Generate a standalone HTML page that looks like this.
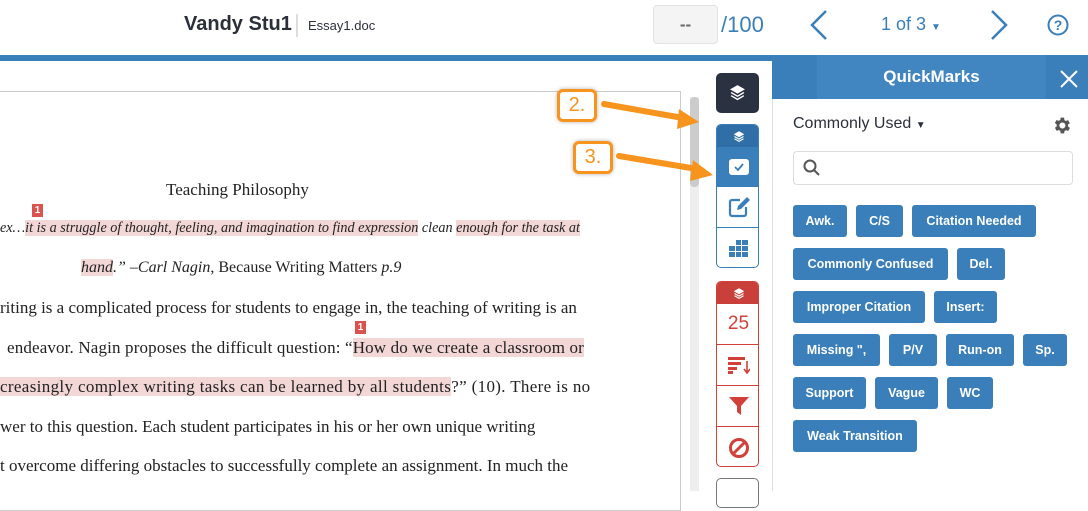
<!DOCTYPE html>
<html><head><meta charset="utf-8"><style>
*{margin:0;padding:0;box-sizing:border-box}
body{width:1088px;height:491px;overflow:hidden;background:#fff;font-family:"Liberation Sans",sans-serif;position:relative}
.a{position:absolute}
.doc{font-family:"Liberation Serif",serif;font-size:17px;color:#222;white-space:nowrap}
.hl{background:#f3d6d6}
.btn{position:absolute;height:32px;background:#3a7fba;color:#fff;font-size:12.5px;font-weight:bold;border-radius:3px;text-align:center;line-height:32px}
.tb{position:absolute;left:716px;width:43px}
.cell{position:absolute;left:0;width:43px;display:flex;align-items:center;justify-content:center}
.badge{position:absolute;background:#d9534f;color:#fff;font-size:10px;font-weight:bold;width:11px;height:13px;text-align:center;line-height:13px;font-family:"Liberation Sans",sans-serif}
.call{position:absolute;width:40px;height:33px;border:3px solid #f7941d;border-radius:6px;background:#fff;color:#f7941d;font-size:20px;text-align:center;line-height:27px;box-shadow:0 0 4px rgba(0,0,0,.3)}
</style></head><body>
<div class="a" style="left:184px;top:13px;font-size:20px;font-weight:bold;color:#2a2f3a">Vandy Stu1</div>
<div class="a" style="left:296px;top:14px;width:2px;height:23px;background:#ddd"></div>
<div class="a" style="left:308px;top:18px;font-size:13px;color:#2a2f3a">Essay1.doc</div>
<div class="a" style="left:653px;top:5px;width:65px;height:39px;background:#f4f4f4;border:1px solid #e3e3e3;border-radius:4px;text-align:center;line-height:37px;font-size:17px;font-weight:bold;color:#666">--</div>
<div class="a" style="left:721px;top:12px;font-size:22px;color:#3a7fba">/100</div>
<svg class="a" style="left:808px;top:9px" width="22" height="32"><path d="M18 2 L4 16 L18 30" stroke="#3a7fba" stroke-width="2.5" fill="none"/></svg>
<div class="a" style="left:881px;top:14px;font-size:18px;color:#3a7fba">1 of 3 <span style="font-size:10px">▼</span></div>
<svg class="a" style="left:988px;top:9px" width="22" height="32"><path d="M4 2 L18 16 L4 30" stroke="#3a7fba" stroke-width="2.5" fill="none"/></svg>
<svg class="a" style="left:1047px;top:14px" width="22" height="22"><circle cx="11" cy="11" r="9.5" stroke="#3a7fba" stroke-width="2" fill="none"/><text x="11" y="16" font-size="14" font-weight="bold" fill="#3a7fba" text-anchor="middle" font-family="Liberation Sans">?</text></svg>
<div class="a" style="left:0;top:55px;width:1088px;height:6px;background:#3a7fba"></div>
<div class="a" style="left:772px;top:55px;width:316px;height:44px;background:#3a7fba"></div>
<div class="a" style="left:817px;top:55px;width:229px;height:44px;background:#4186c0;color:#fff;font-weight:bold;font-size:17px;text-align:center;line-height:44px">QuickMarks</div>
<svg class="a" style="left:1060px;top:70px" width="18" height="18"><path d="M1 1L17 17M17 1L1 17" stroke="#fff" stroke-width="2"/></svg>
<div class="a" style="left:772px;top:99px;width:1px;height:392px;background:#ddd"></div>
<div class="a" style="left:793px;top:115px;font-size:16px;color:#2a2f3a">Commonly Used <span style="font-size:10px">▼</span></div>
<svg class="a" style="left:1051px;top:115px" width="21" height="21" viewBox="0 0 24 24"><path fill="#555" d="M19.4 13a7.5 7.5 0 0 0 0-2l2.1-1.6-2-3.5-2.5 1a7.5 7.5 0 0 0-1.7-1L15 3h-4l-.4 2.7a7.5 7.5 0 0 0-1.7 1l-2.5-1-2 3.5L6.600 11a7.5 7.5 0 0 0 0 2l-2.1 1.6 2 3.5 2.5-1a7.5 7.5 0 0 0 1.7 1L11 21h4l.4-2.7a7.5 7.5 0 0 0 1.7-1l2.5 1 2-3.5zM13 15.5a3.5 3.5 0 1 1 0-7 3.5 3.5 0 0 1 0 7z"/></svg>
<div class="a" style="left:793px;top:151px;width:280px;height:34px;border:1px solid #ddd;border-radius:4px"></div>
<svg class="a" style="left:803px;top:159px" width="18" height="18"><circle cx="7" cy="7" r="5.5" stroke="#555" stroke-width="2" fill="none"/><path d="M11 11L16 16" stroke="#555" stroke-width="2"/></svg>
<div class="btn" style="left:793px;top:205px;width:54px">Awk.</div>
<div class="btn" style="left:856px;top:205px;width:47px">C/S</div>
<div class="btn" style="left:912px;top:205px;width:124px">Citation Needed</div>
<div class="btn" style="left:793px;top:248px;width:155px">Commonly Confused</div>
<div class="btn" style="left:957px;top:248px;width:48px">Del.</div>
<div class="btn" style="left:793px;top:291px;width:132px">Improper Citation</div>
<div class="btn" style="left:934px;top:291px;width:63px">Insert:</div>
<div class="btn" style="left:793px;top:334px;width:87px">Missing ",</div>
<div class="btn" style="left:889px;top:334px;width:48px">P/V</div>
<div class="btn" style="left:946px;top:334px;width:68px">Run-on</div>
<div class="btn" style="left:1023px;top:334px;width:44px">Sp.</div>
<div class="btn" style="left:793px;top:377px;width:73px">Support</div>
<div class="btn" style="left:875px;top:377px;width:63px">Vague</div>
<div class="btn" style="left:947px;top:377px;width:46px">WC</div>
<div class="btn" style="left:793px;top:420px;width:124px">Weak Transition</div>
<div class="a" style="left:-5px;top:91px;width:686px;height:420px;border:1px solid #ccc"></div>
<div class="a" style="left:690px;top:97px;width:9px;height:394px;background:#eee"></div>
<div class="a" style="left:690px;top:97px;width:9px;height:90px;background:#ccc;border-radius:4px"></div>
<div class="a doc" style="left:166px;top:180px">Teaching Philosophy</div>
<div class="badge" style="left:32px;top:204px">1</div>
<div class="a doc" style="left:-4px;top:220px;font-style:italic;font-size:14.2px">lex…<span class="hl">it is a struggle of thought, feeling, and imagination to find expression</span> clean <span class="hl">enough for the task at</span></div>
<div class="a doc" style="left:81px;top:259px;font-size:16px"><i><span class="hl">hand</span>.” –Carl Nagin</i>, Because Writing Matters <i>p.9</i></div>
<div class="a doc" style="left:0;top:298px">riting is a complicated process for students to engage in, the teaching of writing is an</div>
<div class="badge" style="left:355px;top:321px">1</div>
<div class="a doc" style="left:7px;top:338px;letter-spacing:0.15px">endeavor.  Nagin proposes the difficult question: “<span class="hl">How do we create a classroom or</span></div>
<div class="a doc" style="left:0;top:377px;letter-spacing:0.35px"><span class="hl">creasingly complex writing tasks can be learned by all students</span>?” (10).  There is no</div>
<div class="a doc" style="left:0;top:417px">wer to this question.  Each student participates in his or her own unique writing</div>
<div class="a doc" style="left:0;top:456px">t overcome differing obstacles to successfully complete an assignment.  In much the</div>
<div class="tb" style="top:73px;height:40px;background:#2a3140;border-radius:5px"></div>
<svg class="a" style="left:729px;top:84px" width="17" height="17" viewBox="0 0 16 16"><path d="M8 1L15 5L8 9L1 5Z" fill="#fff"/><path d="M2 8L8 11.5L14 8M2 11L8 14.5L14 11" stroke="#fff" stroke-width="1.3" fill="none"/></svg>
<div class="tb" style="top:124px;height:144px;border:1px solid #3a7fba;border-radius:5px;overflow:hidden">
 <div class="cell" style="top:0;height:22px;background:#2f6ea6"><svg width="12" height="13" viewBox="0 0 16 16"><path d="M8 1L15 5L8 9L1 5Z" fill="#fff"/><path d="M2 8L8 11.5L14 8M2 11L8 14.5L14 11" stroke="#fff" stroke-width="1.5" fill="none"/></svg></div>
 <div class="cell" style="top:22px;height:40px;background:#3a7fba;border-bottom:1px solid #3a7fba"><svg width="20" height="16"><rect x="0" y="0" width="20" height="16" rx="3" fill="#fff"/><path d="M6 8L9 11L14 5" stroke="#3a7fba" stroke-width="1.8" fill="none"/></svg></div>
 <div class="cell" style="top:62px;height:41px;border-bottom:1px solid #3a7fba"><svg width="22" height="22"><path d="M12 4H4a2 2 0 0 0-2 2v12a2 2 0 0 0 2 2h12a2 2 0 0 0 2-2v-7" stroke="#3a7fba" stroke-width="2.2" fill="none"/><path d="M9 14l1-4 9-9 3 3-9 9z" fill="#3a7fba"/></svg></div>
 <div class="cell" style="top:103px;height:41px"><svg width="20" height="18"><g fill="#3a7fba"><rect x="7" y="0" width="5" height="5"/><rect x="13" y="0" width="6" height="5"/><rect x="7" y="6" width="5" height="5"/><rect x="13" y="6" width="6" height="5"/><rect x="0" y="12" width="6" height="5"/><rect x="7" y="12" width="5" height="5"/><rect x="13" y="12" width="6" height="5"/><rect x="0" y="6" width="6" height="5"/></g></svg></div>
</div>
<div class="tb" style="top:281px;height:186px;border:1px solid #d2403a;border-radius:5px;overflow:hidden">
 <div class="cell" style="top:0;height:22px;background:#c9403a"><svg width="12" height="13" viewBox="0 0 16 16"><path d="M8 1L15 5L8 9L1 5Z" fill="#fff"/><path d="M2 8L8 11.5L14 8M2 11L8 14.5L14 11" stroke="#fff" stroke-width="1.5" fill="none"/></svg></div>
 <div class="cell" style="top:22px;height:41px;border-bottom:1px solid #d2403a;color:#d2403a;font-size:19px">25</div>
 <div class="cell" style="top:63px;height:41px;border-bottom:1px solid #d2403a"><svg width="22" height="18"><g fill="#d2403a"><rect x="0" y="1" width="17" height="3"/><rect x="0" y="6" width="13" height="3"/><rect x="0" y="11" width="9" height="3"/><rect x="0" y="15" width="5" height="3"/></g><path d="M19 5V16M16 13L19 17L22 13" stroke="#d2403a" stroke-width="1.6" fill="none"/></svg></div>
 <div class="cell" style="top:104px;height:41px;border-bottom:1px solid #d2403a"><svg width="20" height="18"><path d="M0 0H20L12 9V18L8 15V9Z" fill="#d2403a"/></svg></div>
 <div class="cell" style="top:145px;height:41px"><svg width="22" height="22"><circle cx="11" cy="11" r="8.5" stroke="#d2403a" stroke-width="3" fill="none"/><path d="M5 17L17 5" stroke="#d2403a" stroke-width="3"/></svg></div>
</div>
<div class="tb" style="top:478px;height:30px;border:1px solid #777;border-radius:5px"></div>
<div class="call" style="left:557px;top:89px">2.</div>
<div class="call" style="left:573px;top:141px">3.</div>
<svg class="a" style="left:0;top:0" width="720" height="200"><path d="M604 104 L683 118" stroke="#f7941d" stroke-width="6" stroke-linecap="round"/><path d="M679 109 L699 122 L677 129Z" fill="#f7941d"/><path d="M619 156 L697 169" stroke="#f7941d" stroke-width="6" stroke-linecap="round"/><path d="M693 160 L713 175 L690 181Z" fill="#f7941d"/></svg>
</body></html>
